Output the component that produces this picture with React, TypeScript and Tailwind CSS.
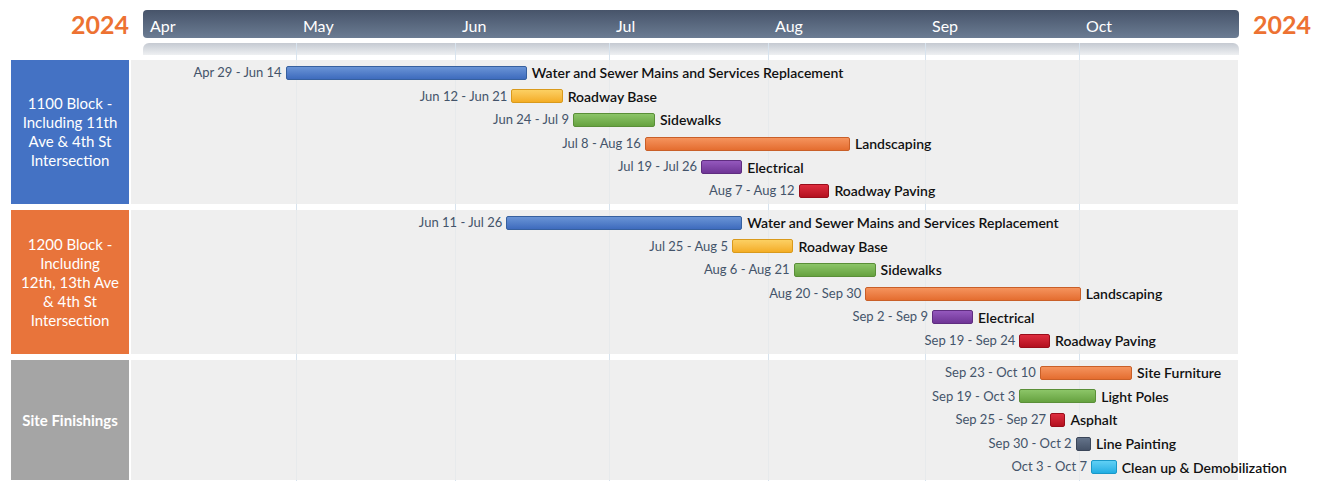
import React from 'react';

const CUM: Record<string, number> = { Apr: 0, May: 30, Jun: 61, Jul: 91, Aug: 122, Sep: 153, Oct: 183 };
const X0 = 142;
const PX = 5.13;

const d = (s: string) => {
  const [m, n] = s.split(' ');
  return CUM[m] + Number(n) - 1;
};

type Task = { range: string; name: string; bar: string };

const groups: { label: string; bg: string; bold?: boolean; tasks: Task[]; h: string }[] = [
  {
    label: '1100 Block - Including 11th Ave & 4th St Intersection',
    bg: 'bg-[#4472c4]',
    h: 'h-[144px]',
    tasks: [
      { range: 'Apr 29 - Jun 14', name: 'Water and Sewer Mains and Services Replacement', bar: 'from-[#6a94d6] to-[#3e6bbd] border-[#36609f]' },
      { range: 'Jun 12 - Jun 21', name: 'Roadway Base', bar: 'from-[#fcd062] to-[#f4ad22] border-[#d99a1c]' },
      { range: 'Jun 24 - Jul 9', name: 'Sidewalks', bar: 'from-[#8cc568] to-[#66a23f] border-[#5a8f38]' },
      { range: 'Jul 8 - Aug 16', name: 'Landscaping', bar: 'from-[#f5935c] to-[#e46d2f] border-[#c95f28]' },
      { range: 'Jul 19 - Jul 26', name: 'Electrical', bar: 'from-[#9458bd] to-[#6f3596] border-[#5f2d80]' },
      { range: 'Aug 7 - Aug 12', name: 'Roadway Paving', bar: 'from-[#de2c3e] to-[#b3101f] border-[#9a0d1a]' },
    ],
  },
  {
    label: '1200 Block - Including 12th, 13th Ave & 4th St Intersection',
    bg: 'bg-[#e8743b]',
    h: 'h-[144px]',
    tasks: [
      { range: 'Jun 11 - Jul 26', name: 'Water and Sewer Mains and Services Replacement', bar: 'from-[#6a94d6] to-[#3e6bbd] border-[#36609f]' },
      { range: 'Jul 25 - Aug 5', name: 'Roadway Base', bar: 'from-[#fcd062] to-[#f4ad22] border-[#d99a1c]' },
      { range: 'Aug 6 - Aug 21', name: 'Sidewalks', bar: 'from-[#8cc568] to-[#66a23f] border-[#5a8f38]' },
      { range: 'Aug 20 - Sep 30', name: 'Landscaping', bar: 'from-[#f5935c] to-[#e46d2f] border-[#c95f28]' },
      { range: 'Sep 2 - Sep 9', name: 'Electrical', bar: 'from-[#9458bd] to-[#6f3596] border-[#5f2d80]' },
      { range: 'Sep 19 - Sep 24', name: 'Roadway Paving', bar: 'from-[#de2c3e] to-[#b3101f] border-[#9a0d1a]' },
    ],
  },
  {
    label: 'Site Finishings',
    bg: 'bg-[#a5a5a5]',
    bold: true,
    h: 'h-[120px]',
    tasks: [
      { range: 'Sep 23 - Oct 10', name: 'Site Furniture', bar: 'from-[#f5935c] to-[#e46d2f] border-[#c95f28]' },
      { range: 'Sep 19 - Oct 3', name: 'Light Poles', bar: 'from-[#8cc568] to-[#66a23f] border-[#5a8f38]' },
      { range: 'Sep 25 - Sep 27', name: 'Asphalt', bar: 'from-[#de2c3e] to-[#b3101f] border-[#9a0d1a]' },
      { range: 'Sep 30 - Oct 2', name: 'Line Painting', bar: 'from-[#64738a] to-[#465368] border-[#3b4659]' },
      { range: 'Oct 3 - Oct 7', name: 'Clean up & Demobilization', bar: 'from-[#5fd0f5] to-[#1eaee3] border-[#1a98c8]' },
    ],
  },
];

const months = [
  { m: 'Apr', x: 150 },
  { m: 'May', x: 303 },
  { m: 'Jun', x: 462 },
  { m: 'Jul', x: 616 },
  { m: 'Aug', x: 775 },
  { m: 'Sep', x: 932 },
  { m: 'Oct', x: 1086 },
];
const lines = [296, 455, 609, 768, 925, 1079];

const TaskRow = ({ t }: { t: Task }) => {
  const [a, b] = t.range.split(' - ');
  const left = X0 + d(a) * PX - 131;
  const width = (d(b) - d(a) + 1) * PX;
  return (
    <div className="relative h-[23.6px]">
      <div
        className="absolute top-0 h-full flex items-center justify-end pr-[4px] text-[13px] text-[#44546a] whitespace-nowrap"
        style={{ right: `calc(100% - ${left}px)` }}
      >
        {t.range}
      </div>
      <div className="absolute top-0 h-full flex items-center gap-[5px] whitespace-nowrap" style={{ left }}>
        <div className={`h-[14px] rounded-[2px] border bg-gradient-to-b ${t.bar}`} style={{ width }} />
        <span className="text-[14px] font-semibold text-[#111]">{t.name}</span>
      </div>
    </div>
  );
};

export default function App() {
  return (
    <div className="relative w-[1320px] h-[497px] bg-white overflow-hidden" style={{ fontFamily: 'Lato, "Open Sans", sans-serif' }}>
      {/* header */}
      <div className="flex items-center h-[28px] mt-[10px]">
        <div className="w-[143px] pr-[14px] text-right text-[25px] font-bold text-[#ed7232] leading-none">2024</div>
        <div className="relative w-[1096px] h-[28px] rounded-[4px] bg-gradient-to-b from-[#47546a] to-[#6b7c93]">
          {months.map((m) => (
            <span key={m.m} className="absolute top-[4px] text-[16px] text-white" style={{ left: m.x - 143 }}>
              {m.m}
            </span>
          ))}
        </div>
        <div className="pl-[14px] text-[25px] font-bold text-[#ed7232] leading-none">2024</div>
      </div>
      <div className="ml-[143px] mt-[5px] w-[1096px] h-[12px] rounded-t-[6px] bg-gradient-to-b from-[#c5cad2] to-[#eef0f2]" />

      {/* grid lines */}
      {lines.map((x) => (
        <div key={x} className="absolute top-[43px] bottom-[16px] w-px bg-[#d7e3ee]" style={{ left: x }} />
      ))}

      <div className="mt-[5px] flex flex-col gap-[6px]">
        {groups.map((g) => (
          <div key={g.label} className={`flex ${g.h}`}>
            <div
              className={`ml-[11px] w-[118px] ${g.bg} flex items-center justify-center text-center text-white text-[15px] leading-[19px] px-[10px] ${g.bold ? 'font-bold' : ''}`}
            >
              {g.label}
            </div>
            <div className="relative ml-[2px] w-[1107px] bg-[#ebebeb]/80 pt-[1px]">
              {g.tasks.map((t) => (
                <TaskRow key={t.range + t.name} t={t} />
              ))}
            </div>
          </div>
        ))}
      </div>
    </div>
  );
}
